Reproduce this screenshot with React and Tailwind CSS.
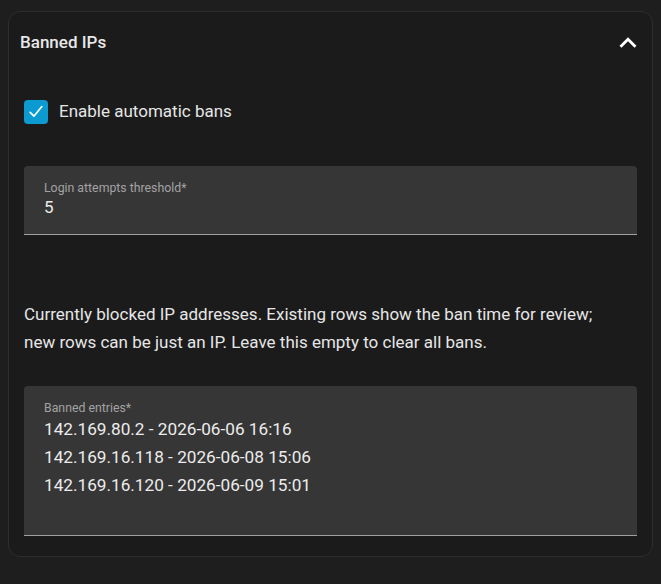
import React from "react";

export default function App() {
  return (
    <div className="w-[661px] h-[584px] bg-[#1e1e1e] pt-[11px] px-[8px] overflow-hidden" style={{ fontFamily: "Roboto, 'Noto Sans', sans-serif" }}>
      <div className="h-[546px] rounded-[12px] border border-[#2e2e2e] bg-[#1b1b1b] text-[#e1e1e1]">
        <div className="h-[62px] flex items-center justify-between pl-[11px] pr-[7px]">
          <span className="text-[17px] font-medium text-[#e8e8e8]">Banned IPs</span>
          <svg width="34" height="34" viewBox="0 0 24 24" className="text-white">
            <path d="M7.41 15.41 12 10.83l4.59 4.58L18 14l-6-6-6 6z" fill="currentColor" />
          </svg>
        </div>
        <div className="px-[15px]">
          <div className="flex items-center gap-[11px] mt-[25px] h-[26px]">
            <div className="w-[24px] h-[24px] rounded-[4px] bg-[#0b9bd0] flex items-center justify-center">
              <svg width="20" height="20" viewBox="0 0 24 24" fill="none">
                <path d="M5 12.5l4.5 4.5L19 5.5" stroke="white" strokeWidth="2" strokeLinecap="round" strokeLinejoin="round" />
              </svg>
            </div>
            <span className="text-[17px] text-[#e6e6e6]">Enable automatic bans</span>
          </div>
          <div className="mt-[41px] h-[69px] rounded-t-[4px] bg-[#363636] border-b border-[#a0a0a0] px-[20px] pt-[15px]">
            <div className="text-[12.3px] leading-[14px] text-[#a3a3a3]">Login attempts threshold*</div>
            <div className="text-[17px] leading-[24px] text-[#ececec]">5</div>
          </div>
          <p className="mt-[65px] max-w-[590px] text-[17px] leading-[28px] text-[#e6e6e6]">
            Currently blocked IP addresses. Existing rows show the ban time for review; new rows can be just an IP. Leave this empty to clear all bans.
          </p>
          <div className="mt-[30px] h-[150px] rounded-t-[4px] bg-[#363636] border-b border-[#a0a0a0] px-[20px] pt-[15px]">
            <div className="text-[12.3px] leading-[14px] text-[#a3a3a3]">Banned entries*</div>
            <div className="text-[17.2px] leading-[28px] text-[#ececec]">
              <div>142.169.80.2 - 2026-06-06 16:16</div>
              <div>142.169.16.118 - 2026-06-08 15:06</div>
              <div>142.169.16.120 - 2026-06-09 15:01</div>
            </div>
          </div>
        </div>
      </div>
    </div>
  );
}
